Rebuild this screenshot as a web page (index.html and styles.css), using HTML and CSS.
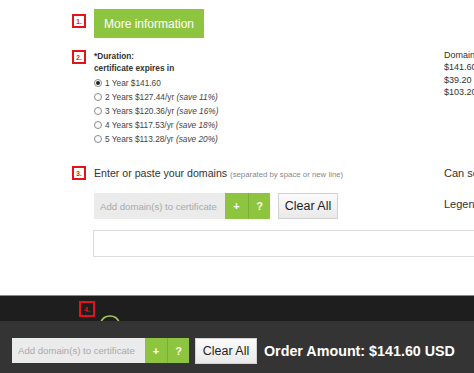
FILE: index.html
```html
<!DOCTYPE html>
<html lang="en">
<head>
    <meta charset="UTF-8">
    <meta name="viewport" content="width=device-width, initial-scale=1.0">
    <title>Order certificate</title>
    <link rel="stylesheet" href="styles.css">
</head>
<body>
    <div class="page">
        <div class="step step-info">
            <span class="num">1.</span>
            <div class="main">
                <button class="btn-more">More information</button>
            </div>
        </div>

        <div class="step step-duration">
            <span class="num">2.</span>
            <div class="main">
                <div class="label">*Duration:<br>certificate expires in</div>
                <ul class="periods">
                    <li><span class="radio checked"></span>1 Year $141.60</li>
                    <li><span class="radio"></span>2 Years $127.44/yr&nbsp;<em>(save 11%)</em></li>
                    <li><span class="radio"></span>3 Years $120.36/yr&nbsp;<em>(save 16%)</em></li>
                    <li><span class="radio"></span>4 Years $117.53/yr&nbsp;<em>(save 18%)</em></li>
                    <li><span class="radio"></span>5 Years $113.28/yr&nbsp;<em>(save 20%)</em></li>
                </ul>
            </div>
            <div class="side side-prices">
                <div>Domains</div>
                <div>$141.60</div>
                <div>$39.20</div>
                <div>$103.20</div>
            </div>
        </div>

        <div class="step step-domains">
            <span class="num">3.</span>
            <div class="main">
                <div class="heading">Enter or paste your domains <small>(separated by space or new line)</small></div>
                <div class="add-row">
                    <div class="domain-field">
                        <input type="text" placeholder="Add domain(s) to certificate">
                        <button class="add">+</button><button class="help">?</button>
                    </div>
                    <button class="clear">Clear All</button>
                </div>
                <div class="domain-list"></div>
            </div>
            <div class="side side-notes">
                <div>Can select</div>
                <div class="legend">Legend</div>
            </div>
        </div>
    </div>

    <div class="checkout">
        <span class="num num-dark">4.</span>
        <svg class="spinner" width="24" height="24" viewBox="0 0 24 24">
            <path d="M2.83 8 A10 10 0 0 1 21.17 8" fill="none" stroke="#a9c95c" stroke-width="1.5"/>
        </svg>
    </div>

    <div class="order-bar">
        <div class="domain-field">
            <input type="text" placeholder="Add domain(s) to certificate">
            <button class="add">+</button><button class="help">?</button>
        </div>
        <button class="clear">Clear All</button>
        <span class="order-total">Order Amount: $141.60 USD</span>
    </div>
</body>
</html>
```

FILE: styles.css
```css
html, body {
    overflow: hidden;
}

body {
    margin: 0;
    height: 373px;
    font-family: "Liberation Sans", Arial, sans-serif;
    color: #333;
    background: #fff;
}

.page {
    padding: 9px 0 0 72px;
}

.step {
    display: flex;
    align-items: flex-start;
}

.num {
    display: flex;
    align-items: center;
    justify-content: center;
    flex-shrink: 0;
    box-sizing: border-box;
    width: 14px;
    height: 14px;
    margin-right: 8px;
    border: 2px solid #e3131b;
    background: #fff;
    color: #e3131b;
    font-size: 6.5px;
    font-weight: bold;
}

.main {
    flex-shrink: 0;
    width: 350px;
}

.side {
    white-space: nowrap;
}

/* 1 */
.step-info .num {
    margin-top: 5px;
}

.btn-more {
    height: 29px;
    width: 110px;
    padding: 0;
    border: none;
    background: #8dc540;
    color: #fff;
    font-family: inherit;
    font-size: 12px;
}

/* 2 */
.step-duration {
    margin-top: 12px;
}

.label {
    font-size: 8.3px;
    font-weight: bold;
    line-height: 12px;
}

.periods {
    list-style: none;
    margin: 2px 0 0;
    padding: 0;
}

.periods li {
    display: flex;
    align-items: center;
    height: 14px;
    font-size: 8.3px;
    color: #444;
}

.radio {
    display: inline-flex;
    align-items: center;
    justify-content: center;
    box-sizing: border-box;
    width: 8px;
    height: 8px;
    margin-right: 3px;
    border: 1px solid #8a8a8a;
    border-radius: 50%;
    background: #fff;
}

.radio.checked::after {
    content: "";
    width: 4px;
    height: 4px;
    border-radius: 50%;
    background: #222;
}

.side-prices {
    font-size: 9px;
    line-height: 12.4px;
    margin-top: -1px;
}

/* 3 */
.step-domains {
    margin-top: 20px;
}

.heading {
    font-size: 10.6px;
    line-height: 14px;
    color: #333;
}

.heading small {
    font-size: 7.8px;
    color: #888;
}

.add-row {
    display: flex;
    margin-top: 11px;
}

.domain-field {
    display: flex;
    height: 26px;
}

.domain-field input {
    box-sizing: border-box;
    width: 131px;
    height: 100%;
    padding: 0 6px;
    border: none;
    background: #ebebeb;
    font-family: inherit;
    font-size: 9.6px;
    outline: none;
}

.domain-field input::placeholder {
    color: #a9a9a9;
}

.add, .help {
    width: 23px;
    height: 100%;
    padding: 0;
    border: none;
    background: #8dc540;
    color: #fff;
    font-family: inherit;
    font-size: 11px;
    font-weight: bold;
}

.help {
    width: 22px;
    border-left: 1px solid #7cae36;
    color: #fdf8d8;
}

.clear {
    box-sizing: border-box;
    width: 60px;
    height: 26px;
    margin-left: 8px;
    padding: 0;
    border: 1px solid #d2d2d2;
    background: linear-gradient(#fbfbfb, #e9e9e9);
    color: #222;
    font-family: inherit;
    font-size: 12.5px;
}

.domain-list {
    box-sizing: border-box;
    width: 420px;
    height: 27px;
    margin: 11px 0 0 -1px;
    border: 1px solid #dcdcdc;
}

.side-notes {
    font-size: 11px;
    line-height: 14px;
}

.legend {
    margin-top: 17px;
}

/* 4 */
.checkout {
    display: flex;
    align-items: flex-start;
    height: 79px;
    margin-top: 38px;
    padding: 5px 0 0 79px;
    box-sizing: border-box;
    border-top: 1px solid #8a8a8a;
    background: #1e1e1e;
}

.num-dark {
    width: 16px;
    height: 16px;
    margin-right: 3px;
    background: #1e1e1e;
}

.spinner {
    margin-top: 13px;
}

.order-bar {
    position: fixed;
    left: 0;
    right: 0;
    bottom: 0;
    display: flex;
    align-items: flex-start;
    height: 52px;
    box-sizing: border-box;
    padding: 17px 0 0 12px;
    background: #343434;
}

.order-bar .domain-field {
    height: 25px;
}

.order-bar .domain-field input {
    width: 133px;
}

.order-bar .add, .order-bar .help {
    width: 22px;
}

.order-bar .clear {
    width: 62px;
    height: 26px;
    margin-left: 6px;
}

.order-total {
    margin-left: 7px;
    color: #fff;
    font-size: 14.3px;
    font-weight: bold;
    line-height: 26px;
}
```
